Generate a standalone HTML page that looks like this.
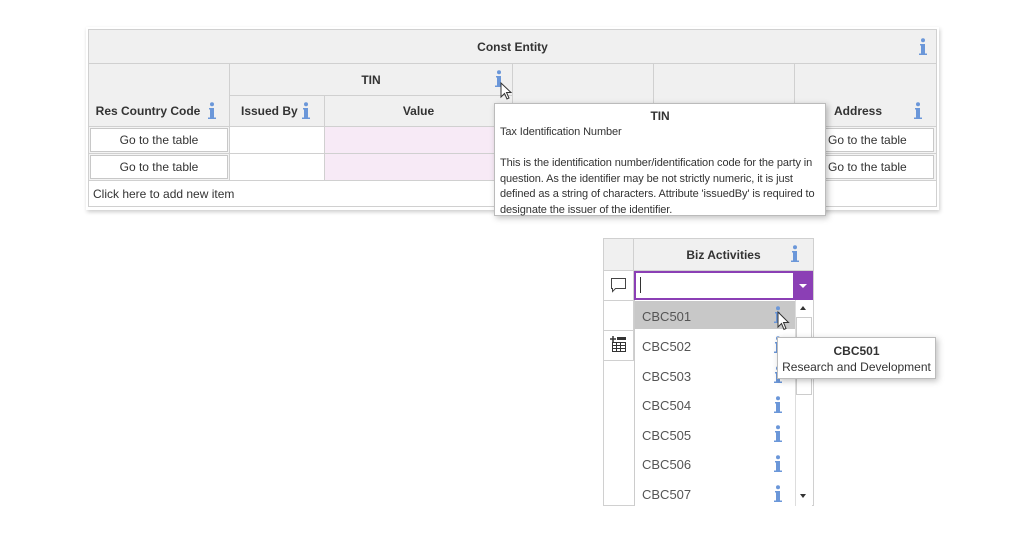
<!DOCTYPE html><html><head><style>
body{margin:0;width:1024px;height:535px;background:#fff;font-family:"Liberation Sans",sans-serif;position:relative;overflow:hidden}
div{box-sizing:border-box}
.a{position:absolute}
.h{background:#f0f0f0;border:1px solid #d0d0d0;font-weight:bold;font-size:12px;color:#333;display:flex;align-items:center;justify-content:center}
.c{background:#fff;border:1px solid #d0d0d0;font-size:12px;color:#333}
.btn{position:absolute;background:#fff;border:1px solid #c8c8c8;font-size:12px;color:#333;text-align:center;line-height:22px}
.tip{position:absolute;background:#fff;border:1px solid #bbb;box-shadow:2px 2px 6px rgba(0,0,0,.25);font-size:12px;color:#333}
.it{position:absolute;font-size:13px;color:#555}
</style></head><body>
<svg width="0" height="0" style="position:absolute"><defs><symbol id="i" viewBox="0 0 10 18"><circle cx="5" cy="2.3" r="2" fill="#6b97d9"/><path d="M2 6h5v9.5h2V17H1v-1.5h2V7.5H2z" fill="#6b97d9"/></symbol></defs></svg>
<div class="a" style="left:86px;top:27px;width:853px;height:183px;box-shadow:1px 2px 4px rgba(0,0,0,.2)"></div>
<div class="a h" style="left:88px;top:29px;width:849px;height:35px">Const Entity</div>
<div class="a h" style="left:88px;top:63px;width:142px;height:64px;align-items:flex-end;padding-bottom:8px;padding-right:22px">Res Country Code</div>
<div class="a h" style="left:229px;top:63px;width:284px;height:33px">TIN</div>
<div class="a h" style="left:229px;top:95px;width:96px;height:32px;justify-content:flex-start;padding-left:11px">Issued By</div>
<div class="a h" style="left:324px;top:95px;width:189px;height:32px">Value</div>
<div class="a h" style="left:512px;top:63px;width:142px;height:64px"></div>
<div class="a h" style="left:653px;top:63px;width:142px;height:64px"></div>
<div class="a h" style="left:794px;top:63px;width:143px;height:64px;align-items:flex-end;padding-bottom:8px;justify-content:flex-start;padding-left:39px">Address</div>
<svg class="a" style="left:918px;top:38px" width="10" height="18"><use href="#i"/></svg>
<svg class="a" style="left:494px;top:70px" width="10" height="18"><use href="#i"/></svg>
<svg class="a" style="left:207px;top:102px" width="10" height="18"><use href="#i"/></svg>
<svg class="a" style="left:301px;top:102px" width="10" height="18"><use href="#i"/></svg>
<svg class="a" style="left:913px;top:102px" width="10" height="18"><use href="#i"/></svg>
<div class="a c" style="left:88px;top:126px;width:849px;height:28px;background:#f4f4f4"></div>
<div class="a c" style="left:88px;top:153px;width:849px;height:28px;background:#f4f4f4"></div>
<div class="a c" style="left:229px;top:126px;width:96px;height:28px"></div>
<div class="a c" style="left:229px;top:153px;width:96px;height:28px"></div>
<div class="a c" style="left:324px;top:126px;width:189px;height:28px;background:#f7eaf6"></div>
<div class="a c" style="left:324px;top:153px;width:189px;height:28px;background:#f7eaf6"></div>
<div class="btn" style="left:90px;top:128px;width:138px;height:24px">Go to the table</div>
<div class="btn" style="left:90px;top:155px;width:138px;height:24px">Go to the table</div>
<div class="btn" style="left:824px;top:128px;width:110px;height:24px;text-align:left;padding-left:3px">Go to the table</div>
<div class="btn" style="left:824px;top:155px;width:110px;height:24px;text-align:left;padding-left:3px">Go to the table</div>
<div class="a c" style="left:88px;top:180px;width:849px;height:27px;line-height:27px;padding-left:4px">Click here to add new item</div>
<svg class="a" style="left:500px;top:82px" width="14" height="20"><path d="M1 1v14l3.5-3.5 2.5 5.5 2-1-2.5-5.5H11z" fill="#fff" stroke="#333" stroke-width="1"/></svg>
<div class="tip" style="left:494px;top:103px;width:332px;height:113px;padding:5px 5px;line-height:15.5px;font-size:11px;letter-spacing:-0.1px">
<div style="text-align:center;font-weight:bold;font-size:12px">TIN</div>
<div>Tax Identification Number</div><div style="height:16px"></div>
<div>This is the identification number/identification code for the party in question. As the identifier may be not strictly numeric, it is just defined as a string of characters. Attribute 'issuedBy' is required to designate the issuer of the identifier.</div></div>

<div class="a" style="left:603px;top:238px;width:211px;height:268px;border:1px solid #d0d0d0;background:#fff"></div>
<div class="a h" style="left:603px;top:238px;width:31px;height:33px"></div>
<div class="a h" style="left:633px;top:238px;width:181px;height:33px">Biz Activities</div>
<svg class="a" style="left:790px;top:245px" width="10" height="18"><use href="#i"/></svg>
<div class="a c" style="left:603px;top:270px;width:31px;height:31px"></div>
<div class="a c" style="left:603px;top:300px;width:31px;height:31px"></div>
<div class="a c" style="left:603px;top:330px;width:31px;height:31px"></div>
<svg class="a" style="left:610px;top:277px" width="17" height="16"><path d="M1.5 1.5h14v10h-10l-3 3v-3h-1z" fill="none" stroke="#444"/></svg>
<svg class="a" style="left:610px;top:336px" width="17" height="17"><path d="M3 0v6M0 3h6" stroke="#333" stroke-width="1.5"/><rect x="7" y="1" width="9" height="3" fill="#333"/><path d="M2.5 6.5h13v9h-13zM2.5 9.5h13M2.5 12.5h13M6.5 6.5v9M10.5 6.5v9" fill="none" stroke="#333"/></svg>
<div class="a" style="left:634px;top:271px;width:179px;height:29px;border:2px solid #8b3fb5;background:#fff"></div>
<div class="a" style="left:640px;top:277px;width:1px;height:16px;background:#333"></div>
<div class="a" style="left:793px;top:271px;width:20px;height:29px;background:#8b3fb5"></div>
<div class="a" style="left:799px;top:284px;border-left:4px solid transparent;border-right:4px solid transparent;border-top:4px solid #fff"></div>
<div class="a" style="left:634px;top:300px;width:162px;height:206px;background:#fff;border-left:1px solid #ccc"></div>
<div class="a" style="left:635px;top:301px;width:160px;height:28px;background:#c8c8c8"></div>
<div class="it" style="left:642px;top:309px">CBC501</div>
<div class="it" style="left:642px;top:339px">CBC502</div>
<div class="it" style="left:642px;top:369px">CBC503</div>
<div class="it" style="left:642px;top:398px">CBC504</div>
<div class="it" style="left:642px;top:428px">CBC505</div>
<div class="it" style="left:642px;top:457px">CBC506</div>
<div class="it" style="left:642px;top:487px">CBC507</div>
<svg class="a" style="left:773px;top:306px" width="10" height="18"><use href="#i"/></svg>
<svg class="a" style="left:773px;top:336px" width="10" height="18"><use href="#i"/></svg>
<svg class="a" style="left:773px;top:366px" width="10" height="18"><use href="#i"/></svg>
<svg class="a" style="left:773px;top:396px" width="10" height="18"><use href="#i"/></svg>
<svg class="a" style="left:773px;top:425px" width="10" height="18"><use href="#i"/></svg>
<svg class="a" style="left:773px;top:455px" width="10" height="18"><use href="#i"/></svg>
<svg class="a" style="left:773px;top:485px" width="10" height="18"><use href="#i"/></svg>
<div class="a" style="left:795px;top:300px;width:17px;height:206px;background:#fff;border-left:1px solid #ddd"></div>
<div class="a" style="left:796px;top:317px;width:16px;height:78px;border:1px solid #ccc;background:#fff"></div>
<div class="a" style="left:800px;top:306px;border-left:3px solid transparent;border-right:3px solid transparent;border-bottom:4px solid #333"></div>
<div class="a" style="left:800px;top:494px;border-left:3px solid transparent;border-right:3px solid transparent;border-top:4px solid #333"></div>
<svg class="a" style="left:777px;top:311px" width="14" height="22"><path d="M1 1v15l3.5-3.5 2.5 6 2-1-2.5-6H11.5z" fill="#fff" stroke="#333"/></svg>
<div class="tip" style="left:777px;top:337px;width:159px;height:42px;text-align:center;padding-top:5px;line-height:16px">
<div style="font-weight:bold">CBC501</div><div>Research and Development</div></div>
</body></html>
